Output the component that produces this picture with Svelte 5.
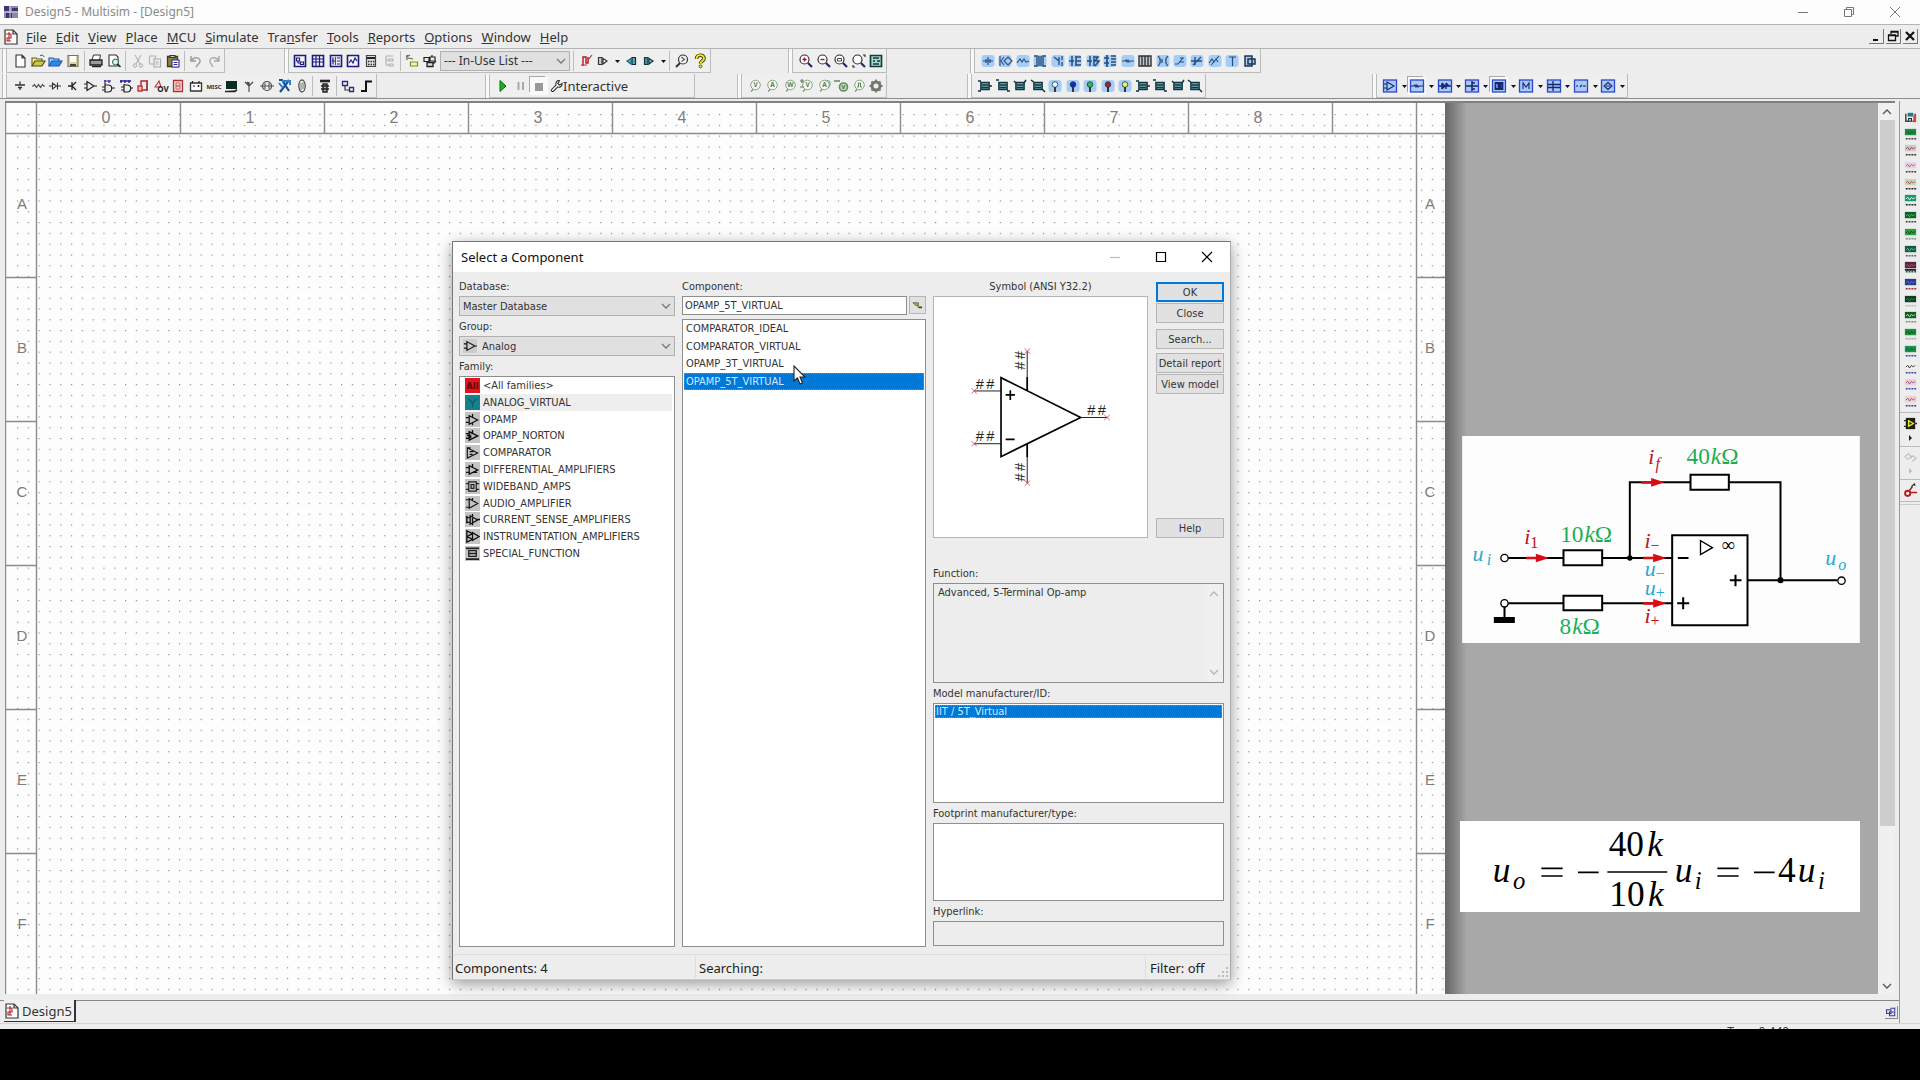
<script>
  const p = (d, c = '#222', w = 1.3, f = 'none') =>
    `<path d="${d}" stroke="${c}" stroke-width="${w}" fill="${f}"/>`;
  const t = (s, c, size = 7, x = 8, y = 11) =>
    `<text x="${x}" y="${y}" font-size="${size}" font-weight="700" text-anchor="middle" fill="${c}">${s}</text>`;
  const halo = '<rect x="1.500" y="2" width="13" height="12" rx="3" fill="#a6cdf6"/>';
  const bl = (d, w = 1.3) => halo + p(d, '#2a4d7c', w);
  const chip = (d) => '<rect x="3" y="4" width="10" height="8" fill="#7fb4c4"/>' + p('M4 4.5h8v7H4zM5 7h6M5 9.500h6' + d, '#12343c', 1.5);
  const pin = (c) => halo + p('M8 8v6', '#111', 1.6) + `<circle cx="8" cy="6.500" r="2.800" fill="${c}" stroke="#234" stroke-width=".8"/>`;
  const box = (d, w = 1.1) => '<rect x="1.500" y="2" width="13" height="12" fill="#a9c9f8" stroke="#2f45cc" stroke-width="1.300"/>' + p(d, '#14266e', w);
  const panel = (d, c = '#1c1c78') => p('M2.500 2.500h11v11h-11z', c, 1.6, '#f4f4ff') + p(d, c, 1.2);
  const probe = (s) => p('M4 13.500l2.500-2.500', '#71906d', 1.1) + '<circle cx="8.500" cy="7" r="4.800" fill="#f4f8f2" stroke="#8aa386"/>' + t(s, '#5d7f58', 6.5, 8.5, 9.3);
  const mag = (d, c = '#1f2a6b') => p('M10 10l4 4', c, 2.2) + '<circle cx="6.500" cy="6.500" r="4.500" fill="#fff" stroke="#3a2b33" stroke-width="1.200"/>' + p(d, '#a3171c', 1.4);
  const inst = (a, b, c, extra = '') =>
    `<rect x="2" y="2" width="12" height="7" fill="${a}"/><rect x="2" y="9" width="12" height="5" fill="#e6e9e6"/>` +
    p('M3 6.500l2-2 2 3 2-3 2 2 2-2', b, 1) + p('M3 12.500h2m1 0h2m1 0h2m1 0h2', c, 1.8) + extra;

  const icons = {
    new: p('M4 2h6l3 3v9H4zM10 2v3h3', '#333', 1.1, '#fff'),
    open: p('M2 13V5h4l1 1h5v2', '#5d5d1d', 1.1, '#f5ef8b') + p('M2 13l3-5h10l-3 5z', '#4b4b12', 1.1, '#c9c945') + p('M10 3c2-2 4 0 4 1', '#333', 1),
    openBlue: p('M2 13V5h4l1 1h5v2', '#1e4f9c', 1.1, '#9cc9f7') + p('M2 13l3-5h10l-3 5z', '#1558b5', 1.1, '#2f8ae6'),
    save: p('M3 2.500h10v11H3z', '#77725a', 1.1, '#d9d3a3') + '<path d="M5 3h6v6H5z" fill="#fff"/><path d="M5 11h6v2H5z" fill="#44423a"/>',
    print: p('M4 7l1.500-5h7L11.500 7', '#333', 1, '#fff') + p('M2 7h12v5H2z', '#222', 1.3, '#9a9a9a') + p('M4 13.500h9', '#222', 1.5),
    preview: p('M3 2h7l2 2v9H3z', '#333', 1.1, '#fff') + '<circle cx="9.500" cy="9" r="3" fill="#d8f0ee" stroke="#2a5e5b"/>' + p('M11.500 11l3 3', '#222', 1.6),
    cut: p('M5 2l5 9M11 2L6 11', '#b5b5b5', 1.2) + '<circle cx="5" cy="12.500" r="1.700" fill="none" stroke="#aaa"/><circle cx="11" cy="12.500" r="1.700" fill="none" stroke="#aaa"/>',
    copy: p('M2.500 3h6v8h-6z', '#b3b3b3', 1.1, '#eee') + p('M7 6h6.500v8H7zM8.500 9h3M8.500 11h3', '#aaa', 1.1, '#eee'),
    paste: p('M2.500 3.500h10v10h-10z', '#413a1e', 1.3, '#8d8046') + p('M5 2.500h5v2H5z', '#333', 1.2, '#ccc') + p('M7 7h7v7H7zM8.500 9.500h4M8.500 11.500h4', '#27308b', 1.1, '#fff'),
    undo: p('M3 3v5h5M3.500 7.500C6 3.500 13 4 12 9l-4 5', '#999', 1.4),
    redo: p('M13 3v5H8M12.500 7.500C10 3.500 3 4 4 9l3 5', '#a8a8a8', 1.4),
    designbox: panel('M4.500 5h3v3h-3zM8.500 9h3v2.500h-3zM6 8v2h2.500'),
    grid: panel('M3 6h10M3 9h10M6 3v10M9.500 3v10'),
    breadbd: panel('M5 4.500v7M4 8h3M9 5h3M9 8h3M9 11h3') + p('M7.500 4v8', '#b22', 1.2),
    grapher: panel('M4 10l2-3 2 3 2-5 2 3'),
    calc: p('M3.500 2.500h9v11h-9z', '#444', 1.2, '#ddd') + p('M4 5h8', '#222', 2) + p('M5 8.500h1.500m1 0H9m1 0h1.500M5 11.500h1.500m1 0H9m1 0h1.500', '#333', 1.6),
    tree: p('M5 3h7M5 3v9h3M5 7h3M8 6h4v2H8zM8 11h4v2H8z', '#b2b2b2', 1.2),
    parent: p('M2 4l4-2M3 2v5M4 5l5 1', '#665', 1.2) + p('M6.500 9h7v4h-7z', '#8b8b21', 1.2, '#f2f1ae'),
    wizard: p('M2 4.500h5v4H2zM8 4h5v4H8zM10 2v2', '#222', 1.2, '#eee') + p('M5 9.500h6v4H5zM11 11l3-3', '#222', 1.3, '#ddd'),
    erc: p('M5 13V4h3v6h2V4', '#b21823', 1.4) + p('M10 7l4-5M3 12h6', '#cc2c36', 1.2),
    fwd: p('M3.500 4.500h3.500v7H3.500z', '#333', 1.2, '#ccc') + p('M8 5.500l4 2.500-4 3z', '#333', 1.2, '#fff'),
    back: p('M9 4.500h3.500v7H9z', '#126', 1.2, '#6aa') + p('M8 5.500L4 8l4 3z', '#146a70', 1.2, '#7ebcc0'),
    fwd2: p('M3.500 4.500h3.500v7H3.500z', '#143b44', 1.2, '#479296') + p('M8 5.500l4 2.500-4 3z', '#143b44', 1.2, '#8cc'),
    find: '<circle cx="9" cy="6.500" r="4.500" fill="#f5f5f5" stroke="#333" stroke-width="1.200"/>' + p('M6 10l-4 4', '#333', 2) + p('M7.500 4l3 2.500-3 2', '#555', 1.1),
    help: p('M4.500 6c0-5 7.500-5 7.500-.5 0 2.500-3.500 2.500-3.500 5', '#3b3a0a', 3.6) + p('M4.500 6c0-5 7.500-5 7.500-.5 0 2.500-3.500 2.500-3.500 5', '#f2e52c', 1.8) + '<circle cx="8.500" cy="13.300" r="1.500" fill="#e8da20" stroke="#3b3a0a" stroke-width=".7"/>',
    zin: mag('M4.500 6.500h4M6.500 4.500v4'),
    zout: mag('M4.500 6.500h4'),
    zarea: mag('') + p('M4.500 5.500h4v2.500h-4z', '#444', 1),
    zfit: mag('') + p('M12 2h2v2M2 12v2h2', '#222', 1.1),
    full: p('M2.500 2.500h11v11h-11z', '#143c3a', 1.7, '#a9d6d0') + p('M5 5h6M5 8h2m2 0h3M5 11h6', '#143c3a', 1.3),
    source: p('M3 7h10M6 9.500h4M8 3.500v4M8 9.500V12', '#333', 1.3),
    resistor: p('M2 8h1.500l1-1.500 2 3 2-3 2 3 2-3 1 1.500h1.500', '#444', 1.1),
    diode: p('M2 8h3M5.500 5v6l4-3zM10.500 4.500v7M11 8h3', '#333', 1.1),
    npn: p('M3 8h4M7 4v8M7 8l4-4M7 8l4 4', '#222', 1.3),
    opamp: p('M5 3.500v9l7-4.500zM2 6h3M2 10h3M12 8h3', '#222', 1.2),
    ttl: p('M5 5v9h3c5 0 5-7 0-7H5M2 9h3M2 12h3M12 10h3', '#222', 1.2) + p('M4 3h7M5 2v3M9 2v3', '#26269c', 1.2),
    cmos: p('M6 6v8h3c5 0 5-7 0-7H6M3 9h3M3 12h3M12 10h3', '#222', 1.2) + p('M2 3h11M3 2v3M7 2v3M11 2v3', '#26269c', 1.4),
    misc7: p('M6 3h6v9H6z', '#b3262c', 1.4) + p('M3 8h4v5H3z', '#c33', 1.4, '#fbb') + p('M12 2v11', '#933', 1.2),
    mixed: p('M2 9l4-6 2 6z', '#c33', 1.2) + t('OV', '#222', 8, 10, 14),
    indicator: p('M3.500 2.500h9v11h-9z', '#a33', 1.3, '#f6d8d8') + p('M6 5h4v3H6zM6 8h4v3H6z', '#c66', 1),
    power: p('M2.500 5h11v8h-11z', '#333', 1.3, '#fff') + p('M4.500 3v2M11 3v2M5 8h2M9.500 8h2M10.500 7v2', '#222', 1.2),
    misc: t('MISC', '#333', 6),
    adv: '<path d="M3 3h11v8H3z" fill="#0d2b20"/>' + p('M2 13.500h10l2-2', '#222', 1.5, '#888'),
    rf: p('M8 14V4M4 4l4 4 4-4M6 4l2 2', '#444', 1.1),
    motor: '<circle cx="8" cy="8" r="4.500" fill="#eee" stroke="#444" stroke-width="1.200"/>' + p('M1 8h14M6 5v6M10 5v6', '#555', 1.1),
    ni: p('M3 2h3l7 11M13 2L8 9l-4 5', '#1b4f96', 2.2) + p('M6 3h8v4M3 5l4 5', '#2d7fd0', 2),
    conn: '<ellipse cx="8" cy="8" rx="3.200" ry="6" fill="#eee" stroke="#555" stroke-width="1.300"/>' + p('M7 5v7M9 4v7', '#777', 1, 'none'),
    mcu: p('M3 3h10', '#222', 2.6) + p('M6 6h4v8H6zM4 8h8M4 11h8', '#222', 1.4, '#aaa'),
    hier: p('M2.500 3.500h5v4h-5z', '#26268b', 1.3) + p('M5 8v4h4', '#333', 1.2) + p('M9.500 9.500h4v4h-4z', '#26268b', 1.3),
    bus: p('M3 13h5V3.500h6', '#111', 2),
    pV: probe('V'), pA: probe('A'), pW: probe('W'),
    pVV: probe('V') + p('M1 3h4M3 1v4M1 9h4', '#5d7f58', 1.2),
    pVA: probe('A') + p('M10 3c4-2 6 3 2 7', '#8aa386', 1.1),
    pVr: p('M1 3h6', '#5d7f58', 1.4) + '<circle cx="10.500" cy="9" r="4" fill="#c5dabf" stroke="#5f8f5a" stroke-width="1.600"/>' + t('V', '#3a6b38', 6, 10.5, 11.3),
    pD: probe('') + p('M6 9h1.500V5h2v4H11', '#5d7f58', 1),
    gear: '<circle cx="8" cy="8" r="4" fill="none" stroke="#6f7a6d" stroke-width="3"/>' + p('M8 1.500v3M8 11.500v3M1.500 8h3M11.500 8h3M3.500 3.500l2 2M10.500 10.500l2 2M12.500 3.500l-2 2M5.500 10.500l-2 2', '#6f7a6d', 1.8),
    b0: bl('M3 8h10M8 4v8M6 6v4M10 6v4', 1.2), b1: bl('M3 3v10M4 8l3-4M4 8l3 4M11 4l4 4-4 4-4-4z', 1.1),
    b2: bl('M2 10l3-4 2 3 2-3 2 3 3-1', 1.1), b3: bl('M2 3h3v10H2M14 3h-3v10h3M7 3v10M9 3v10', 1.4),
    b4: bl('M4 4l5 4M9 4v8M12 3v4M12 9v4'), b5: bl('M2 8h5M5 3v10M9 3v10M9 4h5M9 8h5M9 12h5', 1.5),
    b6: bl('M2 8h5M5 3v10M9 3v10M9 4h4l-3 4h4l-4 5', 1.5), b7: bl('M2 5h5M2 10h5M5 2v12M9 3h5M9 6h5M9 9h5M9 12h5', 1.7),
    b8: bl('M2 8h3l1-1 1 2 1-2 1 2 1-1h4', 1.1), b9: p('M2 3h12v10H2zM5 3v10M8 3v10M11 3v10', '#333', 1.4, '#b9cbd6'),
    b10: bl('M3 3c3 2 3 8 0 10M13 3c-3 2-3 8 0 10M7 6v4'), b11: bl('M3 11h3l5-6M8 5h4M7 9h5', 1.1),
    b12: bl('M2 8h11M4 12l8-8M6 4v8', 1.4), b13: bl('M2 10l3-4 2 3 2-3 2 3M4 12l8-9', 1.1),
    b14: bl('M5 4h7M8.500 4v9', 1.2), b15: p('M3 3h7v10H3zM6 6h7v5H6z', '#17365f', 1.5, '#b7cbe0'),
    c0: chip('M1 3h3M1 13h3M12 8h3'), c1: chip('M1 2h3M12 13h3'), c2: chip('M2 3l2 2M14 2l-2 3'), c3: chip('M1 2l4 3M12 11l3 3'),
    n0: pin('#f5faff'), n1: pin('#1a28c8'), n2: pin('#2bbd5b'), n3: pin('#9d2530'), n4: pin('#f1f26a'),
    v0: box('M5 4v8l7-4zM2 6h3M2 10h3'), v1: box('M2 8h3l1-1 1 2 1-2 1 2 1-1h4'),
    v2: box('M2 8h12M5 5v6M5 5l3 3-3 3M9 5v6M9 5l3 3', 1.4), v3: box('M2 8h12M8 3v10M8 5h3M8 11h3', 1.5),
    v4: box('M4.500 5h7v6h-7zM6.500 7h3v2h-3', 1.8), v5: box('M5 11V5l3 4 3-4v6'),
    v6: box('M2 6.500h12M2 9.500h12M7 3v10', 1.3), v7: box('M3 8h2m2 1l2-2m1 1h3'), v8: box('M8 4.500l4 3.500-4 3.500-4-3.500zM6 8h4'),
    i0: p('M3 4v8h3M13 4v8h-3', '#444', 1.6) + '<path d="M5 3h6v4H5z" fill="#1c7c86"/><path d="M11 6h3v7h-3z" fill="#d0483d"/>' + p('M6 9h3v3H6z', '#222', 1.2),
    i1: inst('#1d8a45', '#0b5c2a', '#444'), i2: inst('#cfc9c9', '#8c4a4a', '#333'), i3: inst('#e6d4e4', '#a3639a', '#443'),
    i4: inst('#c7d6bd', '#b0523e', '#222'), i5: inst('#18966c', '#d9fff0', '#222'), i6: inst('#125e28', '#2ad158', '#444'),
    i7: inst('#2c9b44', '#0c4b1c', '#888'), i8: inst('#155a3a', '#3cc7c0', '#666'), i9: inst('#54263f', '#c24d6c', '#167035', p('M2 10.500h12', '#222', 2)),
    i10: inst('#2a3b86', '#5a6fd0', '#933'), i11: inst('#0e3d20', '#1d8f3d', '#bbb'), i12: inst('#0d5c25', '#b6f0b0', '#888'),
    i13: inst('#19903a', '#0c4b1c', '#aaa'), i14: inst('#1b914d', '#0a5a2c', '#3b46b5'), i15: inst('#f2f2f2', '#333', '#3b46b5'),
    i16: inst('#ead1dc', '#a5507a', '#3b46b5'), i17: inst('#ead1dc', '#b54b5e', '#4b3ba5'),
    lv: '<path d="M3 2h10v12H3z" fill="#1c1d0c"/>' + p('M1 5h2M1 11h2M13 8h2', '#222', 1.4) + p('M6 5v6l5-3z', '#e8e83a', 1.5),
    off: p('M2 7l4-3 3 3-4 3zM8 9l3-3 3 3-4 3', '#bdbdbd', 1.1),
    clamp: '<circle cx="5" cy="11" r="2.800" fill="none" stroke="#b51a20" stroke-width="2"/>' + p('M6 9l4-5M8 10h7', '#b51a20', 1.6) + p('M9 4l3-3 1 2', '#222', 1.2),
    app: '<path d="M1 2h14v12H1z" fill="#8c87ad"/><path d="M1 2h5v5H1zM9 4h6v3H9zM3 9h6v5H3z" fill="#3b3570"/>' + p('M1 8h14M7 2v12', '#d3d0e6', 1),
    doc: p('M2 1h8l4 4v10H2z', '#333', 1.2, '#fff') + p('M10 1v4h4', '#333', 1.2) + p('M3 5h5v4H4v3h4M6 3v9', '#b5202a', 1.1),
    tile: p('M2 5h6v5H2zM7 3h6M6 8h7v5H6zM13 2v5', '#3a3a9a', 1.4, '#dcdcf3')
  };

  const standard = ['new', 'open', 'openBlue', 'save', '|', 'print', 'preview', '|', 'cut', 'copy', 'paste', '|', 'undo', 'redo'];
  const mainA = ['designbox', 'grid', 'breadbd', 'grapher', 'calc', 'tree', '|', 'parent', 'wizard'];
  const mainB = ['|', 'erc', 'fwd', 'v', 'back', 'fwd2', 'v', '|', 'find', 'help'];
  const zoomBar = ['zin', 'zout', 'zarea', 'zfit', 'full'];
  const basic = Array.from({ length: 16 }, (_, i) => 'b' + i);
  const parts = ['source', 'resistor', 'diode', 'npn', 'opamp', 'ttl', 'cmos', 'misc7', 'mixed', 'indicator', 'power', 'misc', 'adv', 'rf', 'motor', 'ni', 'conn', '|', 'mcu', '|', 'hier', 'bus'];
  const probes = ['pV', 'pA', 'pW', 'pVV', 'pVA', 'pVr', 'pD', 'gear'];
  const chips = ['c0', 'c1', 'c2', 'c3', 'n0', 'n1', 'n2', 'n3', 'n4', 'c0', 'c1', 'c2', 'c3'];
  const virtual = Array.from({ length: 9 }, (_, i) => ['v' + i, 'v']).flat();
  const instruments = Array.from({ length: 18 }, (_, i) => 'i' + i);

  const menus = [['', 'F', 'ile'], ['', 'E', 'dit'], ['', 'V', 'iew'], ['', 'P', 'lace'], ['', 'M', 'CU'], ['', 'S', 'imulate'], ['Tra', 'n', 'sfer'], ['', 'T', 'ools'], ['', 'R', 'eports'], ['', 'O', 'ptions'], ['', 'W', 'indow'], ['', 'H', 'elp']];

  const amp = p('M4.500 3v10l9-5zM1 5.500h3.500M1 10.500h3.500M13.500 8H16', '#111', 1.3);
  const families = [
    { n: '<All families>', bg: '#e3141b', g: t('All', '#5c0508', 10, 8, 12) },
    { n: 'ANALOG_VIRTUAL', bg: '#16818d', g: p('M4 4l4 5 4-5M8 9v4', '#0b5c66', 1.4) },
    { n: 'OPAMP', g: p('M4.500 4v9l9-4.500zM1 6h3.500M1 11h3.500M8 2v4M8 11v3', '#111', 1.3) },
    { n: 'OPAMP_NORTON', g: p('M4.500 4v9l9-4.500zM1 6h3.500M1 11h3.500M8 2v4M2 8h4v3', '#111', 1.5) },
    { n: 'COMPARATOR', g: p('M2.500 3v11l11-5.500zM5 7h4M5 10h3M2 3h4', '#111', 1.2) },
    { n: 'DIFFERENTIAL_AMPLIFIERS', g: p('M4.500 4v9l9-4.500zM1 6h3.500M1 11h3.500M8 2v4M9 11h4', '#111', 1.4) },
    { n: 'WIDEBAND_AMPS', g: p('M4 3h8v10H4zM1 5h3M1 11h3M12 5h3M12 11h3M6.500 6v4h3V6z', '#222', 1.3) },
    { n: 'AUDIO_AMPLIFIER', g: p('M4.500 3v10l9-5zM1 4h3.500M1 12h3.500M8 2v3', '#111', 1.3) },
    { n: 'CURRENT_SENSE_AMPLIFIERS', g: p('M5.500 4v9l8-4.500zM1 6h5M1 11h5M2 4v8M8 2v12M13 8h3', '#111', 1.4) },
    { n: 'INSTRUMENTATION_AMPLIFIERS', g: p('M2 2v6l6-3zM2 8v6l6-3zM8 4v8l7-4z', '#111', 1.4) },
    { n: 'SPECIAL_FUNCTION', g: p('M1 2.500h14M1 14h14', '#222', 2) + p('M4 5h8v6H4zM4 8h8', '#222', 1.4) }
  ];
  const components = ['COMPARATOR_IDEAL', 'COMPARATOR_VIRTUAL', 'OPAMP_3T_VIRTUAL', 'OPAMP_5T_VIRTUAL'];
  let family = $state('ANALOG_VIRTUAL');
  let component = $state('OPAMP_5T_VIRTUAL');
  const columns = [0, 1, 2, 3, 4, 5, 6, 7, 8];
  const rows = ['A', 'B', 'C', 'D', 'E', 'F'];
</script>

{#snippet icon(name)}
  <svg class="ico" viewBox="0 0 16 16" aria-hidden="true">{@html icons[name]}</svg>
{/snippet}

{#snippet tools(list)}
  {#each list as name}
    {#if name === '|'}
      <span class="sep"></span>
    {:else if name === 'v'}
      <button class="drop" aria-label="More"><svg viewBox="0 0 8 16" aria-hidden="true"><path d="M2 7h5L4.500 10z" fill="#111" /></svg></button>
    {:else}
      <button class="tool" class:sunk={name === 'v1' || name === 'v4'} aria-label={name}>{@render icon(name)}</button>
    {/if}
  {/each}
{/snippet}

{#snippet chevron(up)}
  <svg class="chev" viewBox="0 0 10 10" aria-hidden="true"><path d={up ? 'M1 7l4-4 4 4' : 'M1 3l4 4 4-4'} fill="none" stroke="currentColor" stroke-width="1.300" /></svg>
{/snippet}

<div class="app">
  <header class="titlebar">
    {@render icon('app')}
    <span class="apptitle">Design5 - Multisim - [Design5]</span>
    <div class="wincontrols">
      <button aria-label="Minimize"><svg viewBox="0 0 12 12"><path d="M1 6.500h10" /></svg></button>
      <button aria-label="Restore"><svg viewBox="0 0 12 12"><path d="M1.500 3.500h7v7h-7zM3.500 3.500v-2h7v7h-2" /></svg></button>
      <button aria-label="Close window"><svg viewBox="0 0 12 12"><path d="M1 1l10 10M11 1L1 11" /></svg></button>
    </div>
  </header>

  <nav class="menubar">
    {@render icon('doc')}
    {#each menus as [a, k, b]}
      <button class="menu">{a}<u>{k}</u>{b}</button>
    {/each}
    <div class="mdi">
      <button aria-label="Minimize document"><svg viewBox="0 0 12 12"><path d="M3 10h5" stroke-width="2" /></svg></button>
      <button aria-label="Restore document"><svg viewBox="0 0 12 12"><path d="M4 4V1.500h7V6H9M4 2h7M1.500 5h7v5.500h-7zM1 5.500h8" stroke-width="1.300" /></svg></button>
      <button aria-label="Close document"><svg viewBox="0 0 12 12"><path d="M2 2l8 8M10 2l-8 8" stroke-width="2.200" /></svg></button>
    </div>
  </nav>

  <div class="toolbars">
    <div class="toolrow">
      <div class="group g-standard">{@render tools(standard)}</div>
      <div class="group g-main">
        {@render tools(mainA)}
        <div class="combo inuse">
          <select aria-label="In-Use List"><option>--- In-Use List ---</option></select>
          {@render chevron(false)}
        </div>
        {@render tools(mainB)}
      </div>
      <div class="group g-zoom">{@render tools(zoomBar)}</div>
      <div class="group g-basic">{@render tools(basic)}</div>
    </div>
    <div class="toolrow">
      <div class="group g-parts">{@render tools(parts)}</div>
      <div class="group g-sim">
        <button class="tool" aria-label="Run"><svg class="ico" viewBox="0 0 16 16"><path d="M5 2.500v11L11 8z" fill="#16b51d" stroke="#0a6b0e" /></svg></button>
        <button class="tool" aria-label="Pause"><svg class="ico" viewBox="0 0 16 16"><path d="M5.500 4v8M10 4v8" stroke="#aaa" stroke-width="2" /></svg></button>
        <button class="tool sunk" aria-label="Stop"><svg class="ico" viewBox="0 0 16 16"><path d="M4 5h8v8H4z" fill="#999" /></svg></button>
        <button class="interactive"><svg class="ico" viewBox="0 0 16 16" aria-hidden="true"><path d="M3 12l5-5C7 3 10 1 12 2l-2 3 2 2 3-2c0 4-3 5-5 4l-5 5c-2 1-3-1-2-2z" fill="#fff" stroke="#222" stroke-width="1.200" /></svg>Interactive</button>
      </div>
      <div class="group g-probes">{@render tools(probes)}</div>
      <div class="group g-chips">{@render tools(chips)}</div>
      <div class="group g-virtual">{@render tools(virtual)}</div>
    </div>
  </div>

  <div class="middle">
    <div class="mainpane">
      <div class="view">
        <svg class="paper" viewBox="5 103 1440 891" preserveAspectRatio="xMinYMin slice" role="img" aria-label="Schematic sheet">
          <defs>
            <pattern id="dots" x="17" y="114" width="10.800" height="10.800" patternUnits="userSpaceOnUse"><rect width="1.200" height="1.200" fill="#8c8c8c" /></pattern>
          </defs>
          <rect x="5" y="103" width="1440" height="891" fill="#fdfdfd" />
          <rect x="14" y="112" width="1430" height="882" fill="url(#dots)" />
          <g class="rule">
            <path d="M5.500 103v891M36.500 103v891M1416.500 103v891M5 133.500h1440" />
            {#each columns as c}<path d={`M${180.5 + c * 144} 103v30`} />{/each}
            {#each rows.slice(0, 5) as _, r}<path d={`M5 ${277.5 + r * 144}h31M1416 ${277.5 + r * 144}h29`} />{/each}
          </g>
          {#each columns as c}<text x={106 + c * 144} y="123">{c}</text>{/each}
          {#each rows as r, i}<text class="row" x="22" y={209 + i * 144}>{r}</text><text class="row" x="1430" y={209 + i * 144}>{r}</text>{/each}
        </svg>

        <div class="desk">
          <svg class="circuit" viewBox="37 18 1193 621" role="img" aria-label="Inverting amplifier circuit">
            <rect x="37" y="18" width="1193" height="621" fill="#fdfdfd" />
            <g fill="none" stroke="#000" stroke-width="6">
              <path d="M175 384H341M457 384H666M175 520H341M457 520H666M540 384V157H722M837 157H992V451M893 451H1163M164 531v32" />
              <path d="M341 361h116v45H341zM341 497h116v44H341zM722 134h115v45H722zM667 316h226v270H667z" fill="#fff" />
              <path d="M684 384h32M682 520h36M700 502v36M840 451h35M857 434v35" />
              <path d="M752 332v42l36-21z" stroke-width="4" />
              <circle cx="164" cy="384" r="11" stroke-width="4" fill="#fff" /><circle cx="164" cy="520" r="11" stroke-width="4" fill="#fff" /><circle cx="1175" cy="452" r="11" stroke-width="4" fill="#fff" />
            </g>
            <path d="M132 561h63v18h-63z" /><circle cx="540" cy="384" r="8" /><circle cx="992" cy="451" r="9" />
            <g fill="#d80d14">
              <path d="M228 380h30v-9l40 13-40 13v-9h-30z" /><path d="M580 380h30v-9l40 13-40 13v-9h-30z" /><path d="M580 516h30v-9l40 13-40 13v-9h-30z" /><path d="M574 153h30v-9l40 13-40 13v-9h-30z" />
            </g>
            <text x="815" y="362" font-size="56">∞</text>
            <g class="green"><text x="710" y="101">40<tspan class="it" dx="3">k</tspan>Ω</text><text x="331" y="337">10<tspan class="it" dx="3">k</tspan>Ω</text><text x="329" y="612">8<tspan class="it" dx="3">k</tspan>Ω</text></g>
            <g class="it red"><text x="595" y="103">i<tspan class="sub" dx="4" dy="14">f</tspan></text><text x="223" y="342">i<tspan class="sub up" dy="12">1</tspan></text><text x="584" y="353">i<tspan class="sub up" dy="10">−</tspan></text><text x="584" y="579">i<tspan class="sub up" dy="10">+</tspan></text></g>
            <g class="it blue"><text x="68" y="393">u<tspan class="sub" dx="10" dy="12">i</tspan></text><text x="1126" y="405">u<tspan class="sub" dx="6" dy="14">o</tspan></text><text x="585" y="437">u<tspan class="sub up" dy="10">−</tspan></text><text x="585" y="495">u<tspan class="sub up" dy="10">+</tspan></text></g>
          </svg>
          <svg class="formula" viewBox="60 63 1200 273" role="img" aria-label="Output voltage formula">
            <rect x="60" y="63" width="1200" height="273" fill="#fff" />
            <path d="M502 216h180M304 205h64M304 228h64M414 217h62M832 205h64M832 228h64M942 217h62" stroke="#000" stroke-width="5" />
            <text class="it" x="158" y="246">u</text><text class="it s" x="219" y="268">o</text>
            <text x="506" y="167">40<tspan class="it" dx="10">k</tspan></text><text x="508" y="318">10<tspan class="it" dx="10">k</tspan></text>
            <text class="it" x="704" y="246">u</text><text class="it s" x="764" y="268">i</text>
            <text x="1014" y="246">4<tspan class="it" dx="6">u</tspan></text><text class="it s" x="1134" y="268">i</text>
          </svg>
        </div>

        <div class="vscroll">
          <button aria-label="Scroll up">{@render chevron(true)}</button>
          <div class="thumb"></div>
          <button aria-label="Scroll down">{@render chevron(false)}</button>
        </div>
      </div>
      <div class="tabs">
        <button class="tab">{@render icon('doc')}Design5</button>
        <button class="tile" aria-label="Sheets">{@render icon('tile')}</button>
      </div>
    </div>
    <aside class="side">
      {#each instruments as name}<button class="tool" aria-label={name}>{@render icon(name)}</button>{/each}
      <hr />
      <button class="tool" aria-label="LabVIEW">{@render icon('lv')}</button>
      <svg class="flyout" viewBox="0 0 8 8"><path d="M3 1v6l3-3z" fill="#222" /></svg>
      <hr />
      <button class="tool" aria-label="NI ELVISmx">{@render icon('off')}</button>
      <svg class="flyout" viewBox="0 0 8 8"><path d="M3 1v6l3-3z" fill="#bbb" /></svg>
      <hr />
      <button class="tool" aria-label="Current clamp">{@render icon('clamp')}</button>
      <hr />
    </aside>
  </div>
  <footer class="status"><span>Tran: 0.440 s</span></footer>
  <div class="letterbox"></div>

  <section class="dialog" aria-label="Select a Component">
    <header class="dtitle">
      <h1>Select a Component</h1>
      <div class="dcontrols">
        <button class="dim" aria-label="Minimize dialog"><svg viewBox="0 0 12 12"><path d="M1 6.500h10" /></svg></button>
        <button aria-label="Maximize dialog"><svg viewBox="0 0 12 12"><path d="M1.500 1.500h9v9h-9z" /></svg></button>
        <button aria-label="Close dialog"><svg viewBox="0 0 12 12"><path d="M1 1l10 10M11 1L1 11" /></svg></button>
      </div>
    </header>

    <div class="dbody">
      <div class="col c1">
        <label for="db">Database:</label>
        <div class="combo"><select id="db"><option>Master Database</option></select>{@render chevron(false)}</div>
        <label for="grp">Group:</label>
        <div class="combo grp"><svg class="ico" viewBox="0 0 16 16" aria-hidden="true"><rect width="16" height="16" fill="#ccc" />{@html amp}</svg><select id="grp"><option>Analog</option></select>{@render chevron(false)}</div>
        <span class="lbl">Family:</span>
        <div class="list">
          <ul class="families">
            {#each families as f}
              <li><button class:current={f.n === family} onclick={() => (family = f.n)}><svg class="fam" viewBox="0 0 16 16" aria-hidden="true"><rect width="16" height="16" fill={f.bg ?? '#c4c4c4'} />{@html f.g}</svg><span>{f.n}</span></button></li>
            {/each}
          </ul>
        </div>
      </div>

      <div class="col c2">
        <label for="comp">Component:</label>
        <div class="comprow">
          <input id="comp" bind:value={component} />
          <button class="filter" aria-label="Filter"><svg viewBox="0 0 12 12"><path d="M1 3h6v3H4z" fill="#a3b23e" stroke="#553" stroke-width=".8" /><path d="M5 7h6v2H8z" fill="#3c4a12" /></svg></button>
        </div>
        <div class="list">
          <ul class="components">
            {#each components as c}
              <li><button class:selected={c === component} onclick={() => (component = c)}>{c}</button></li>
            {/each}
          </ul>
        </div>
      </div>

      <div class="col c3">
        <div class="upper">
          <div class="symcol">
            <span class="lbl center">Symbol (ANSI Y32.2)</span>
            <svg class="symbol" viewBox="39 199 642 723" role="img" aria-label="Five terminal op-amp">
              <g fill="none" stroke="#222" stroke-width="3"><path d="M160 482h80M160 641h80M481 562h80M320 362v118M320 642v118" /></g>
              <g fill="none" stroke="#000" stroke-width="5"><path d="M241 442v238l240-118zM320 440v42M320 642v40M255 494h28M269 480v29M255 628h27" /></g>
              <g stroke="#d8484f" stroke-width="2.500"><path d="M152 474l16 16M168 474l-16 16M152 633l16 16M168 633l-16 16M552 554l17 16M569 554l-17 16M312 354l17 16M329 354l-17 16M312 752l17 16M329 752l-17 16" /></g>
              <text x="177 209" y="475">##</text><text x="177 209" y="634">##</text><text x="513 545" y="556">##</text>
              <text transform="translate(313 406) rotate(-90)" x="0 32" y="0">##</text>
              <text transform="translate(313 743) rotate(-90)" x="0 32" y="0">##</text>
            </svg>
          </div>
          <div class="actions">
            <button class="btn primary">OK</button>
            <button class="btn">Close</button>
            <button class="btn gap">Search...</button>
            <button class="btn gap2">Detail report</button>
            <button class="btn">View model</button>
            <button class="btn last">Help</button>
          </div>
        </div>
        <label for="fn">Function:</label>
        <div class="fn">
          <textarea id="fn" readonly>Advanced, 5-Terminal Op-amp</textarea>
          <div class="fnscroll">{@render chevron(true)}{@render chevron(false)}</div>
        </div>
        <span class="lbl">Model manufacturer/ID:</span>
        <div class="model"><button class="selected">IIT / 5T_Virtual</button></div>
        <span class="lbl">Footprint manufacturer/type:</span>
        <div class="foot"></div>
        <label for="link">Hyperlink:</label>
        <input id="link" class="link" readonly />
      </div>
    </div>

    <footer class="dstatus">
      <span class="s1">Components: 4</span><span class="s2">Searching:</span><span class="s3">Filter: off</span>
      <svg class="gripper" viewBox="0 0 12 12" aria-hidden="true"><path d="M8 0h2v2H8zM8 4h2v2H8zM4 4h2v2H4zM8 8h2v2H8zM4 8h2v2H4zM0 8h2v2H0z" fill="#bbb" /></svg>
    </footer>
  </section>

  <svg class="cursor" viewBox="0 0 14 20" aria-hidden="true"><path d="M1 1v15l3.500-3 2.500 6 2.500-1L7 12h5z" fill="#fff" stroke="#222" stroke-width="1.100" /></svg>
</div>

<style>
  :global(body) { margin: 0; overflow: hidden; }
  .app { position: relative; display: flex; flex-direction: column; height: 100vh; background: #ededed; color: #333; font-family: 'Noto Sans', 'Open Sans', sans-serif; font-size: 13px; overflow: hidden; }
  button { font: inherit; color: inherit; background: none; border: 0; padding: 0; margin: 0; }
  .ico { width: 16px; height: 16px; display: block; flex: none; }

  .titlebar { display: flex; align-items: center; box-sizing: border-box; height: 25px; padding: 0 0 1px 3px; background: #fdfdfd; border-bottom: 1px solid #b4b4b4; }
  .apptitle { margin-left: 6px; color: #8a8a8a; font-size: 12px; line-height: 20px; }
  .wincontrols { margin-left: auto; display: flex; gap: 34px; padding-right: 19px; }
  .wincontrols button, .dcontrols button { width: 12px; height: 12px; }
  .wincontrols svg, .dcontrols svg { display: block; width: 12px; height: 12px; fill: none; stroke: #777; }

  .menubar { display: flex; align-items: center; box-sizing: border-box; height: 24px; padding-left: 3px; border-bottom: 1px solid #b4b4b4; }
  .menu { margin-left: 9px; font-size: 13px; line-height: 20px; }
  .menu:first-of-type { margin-left: 7px; }
  .mdi { margin-left: auto; display: flex; gap: 2px; padding-right: 2px; }
  .mdi button { width: 15px; height: 15px; border-right: 1px solid #777; border-bottom: 1px solid #777; }
  .mdi svg { display: block; width: 12px; height: 12px; margin: auto; fill: none; stroke: #111; }

  .toolbars { height: 49px; border-bottom: 1px solid #8c8c8c; overflow: hidden; }
  .toolrow { display: flex; height: 25px; }
  .toolrow + .toolrow { height: 24px; }
  .group { display: flex; align-items: center; justify-content: space-between; box-sizing: border-box; flex: none; height: 24px; padding: 0 2px 0 5px; border: solid #bcbcbc; border-width: 0 1px 1px 1px; box-shadow: -3px 0 0 #f8f8f8, -4px 0 0 #bcbcbc; background: #efefef; }
  .g-standard { margin-left: 6px; width: 219px; }
  .g-main { margin-left: 63px; width: 423px; padding-left: 3px; }
  .g-zoom { margin-left: 81px; width: 95px; }
  .g-basic { margin-left: 87px; width: 287px; }
  .g-parts { margin-left: 6px; width: 371px; }
  .g-sim { margin-left: 112px; width: 206px; justify-content: flex-start; gap: 2px; }
  .g-probes { margin-left: 46px; width: 146px; }
  .g-chips { margin-left: 84px; width: 235px; }
  .g-virtual { margin-left: 170px; width: 252px; padding: 0 1px 0 5px; }
  .tool { width: 16px; height: 16px; flex: none; }
  .drop, .drop svg { width: 8px; height: 16px; display: block; flex: none; }
  .sep { width: 1px; height: 20px; margin: 0 2px 0 1px; background: #bdbdbd; flex: none; }
  .sunk { background: #fafafa; box-shadow: 0 0 0 1px #fafafa, -2px -2px 0 #a9a9a9; }
  .interactive { display: flex; align-items: center; font-size: 13px; }
  .interactive .ico { width: 14px; height: 14px; }

  .combo { display: grid; align-items: center; border: 1px solid #b0b0b0; background: #e0e0e0; box-sizing: border-box; color: #777; }
  .combo > * { grid-area: 1 / 1; }
  .combo select { appearance: none; width: 100%; height: 100%; border: 0; background: transparent; font: inherit; color: #333; padding: 0 3px; }
  .combo .chev { justify-self: end; margin-right: 3px; }
  .chev { width: 10px; height: 10px; display: block; }
  .inuse { width: 130px; height: 20px; font-size: 12px; line-height: 18px; flex: none; }

  .middle { display: flex; flex: 1; min-height: 0; padding-top: 2px; }
  .mainpane { flex: 1; min-width: 0; display: flex; flex-direction: column; border-right: 1px solid #999; }
  .view { flex: 1; min-height: 0; display: flex; margin-left: 5px; border-top: 2px solid #808080; margin-right: 4px; overflow: hidden; }
  .paper { width: 1440px; height: 100%; flex: none; display: block; }
  .paper text { font: 16px 'Liberation Sans', sans-serif; fill: #7d7d7d; text-anchor: middle; }
  .paper .row { font-size: 15px; }
  .rule { stroke: #8c8c8c; stroke-width: 1.4; fill: none; }
  .desk { flex: 1; display: flex; flex-direction: column; align-items: flex-start; gap: 178px; padding: 333px 0 0 15px; background: linear-gradient(90deg, #666, #a8a8a8 22px); overflow: hidden; }
  .circuit { width: 398px; height: 207px; margin-left: 2px; flex: none; }
  .formula { width: 400px; height: 91px; flex: none; }
  .circuit text, .formula text { font-family: 'Liberation Serif', serif; }
  .circuit g text { font-size: 66px; }
  .circuit .green text { font-size: 70px; }
  .it, .circuit .it text { font-style: italic; }
  .circuit .sub { font-size: 48px; }
  .up { font-style: normal; }
  .green { fill: #1cae55; }
  .red { fill: #b81623; }
  .blue { fill: #2aaad0; }
  .formula text { font-size: 106px; }
  .formula .s { font-size: 74px; }
  .vscroll { width: 17px; display: flex; flex-direction: column; background: #f0f0f0; color: #555; }
  .vscroll button { height: 17px; display: grid; place-items: center; }
  .thumb { height: 706px; margin: 0 0 auto 2px; background: #cdcdcd; }
  .tabs { display: flex; justify-content: space-between; align-items: flex-start; height: 22px; margin-top: 6px; border-top: 1px solid #888; }
  .tab { display: flex; align-items: center; gap: 2px; height: 22px; margin: -1px 0 0 4px; padding: 0 2px 0 0; border: solid #333; border-width: 0 2px 1px 0; background: #f0f0f0; font-size: 13px; }
  .tile { width: 13px; height: 13px; margin: 5px 1px 0 0; border-right: 1px solid #888; border-bottom: 1px solid #888; }
  .tile .ico { width: 12px; height: 12px; }
  .side { width: 20px; display: flex; flex-direction: column; align-items: center; justify-content: flex-start; padding-top: 8px; box-sizing: border-box; height: 404px; border-bottom: 1px solid #ccc; }
  .side .tool { height: 14px; flex: 1 1 14px; display: grid; place-items: center; }
  .side .ico { width: 15px; height: 15px; }
  .side hr { width: 100%; border: 0; border-top: 1px solid #bbb; margin: 2px 0; }
  .flyout { width: 8px; height: 8px; margin: 2px 0; flex: none; }
  .status { height: 5px; overflow: hidden; border-top: 1px solid #d6d6d6; padding-right: 122px; text-align: right; font-size: 12px; line-height: 16px; }
  .letterbox { height: 51px; background: #000; flex: none; }

  .dialog { position: absolute; left: 452px; top: 241px; width: 779px; height: 739px; box-sizing: border-box; display: flex; flex-direction: column; background: #ededed; border: 1px solid #777; border-right-color: #aaa; border-bottom-color: #ccc; box-shadow: 0 4px 14px rgba(0, 0, 0, 0.4); font-family: 'DejaVu Sans Condensed', 'DejaVu Sans', sans-serif; font-stretch: condensed; font-size: 11px; }
  .dtitle { display: flex; align-items: center; height: 30px; background: #fff; padding: 0 17px 0 8px; }
  h1 { margin: 0; font: 400 13px/20px 'Noto Sans', sans-serif; color: #111; }
  .dcontrols { margin-left: auto; display: flex; gap: 34px; }
  .dcontrols svg { stroke: #000; stroke-width: 1.2; }
  .dcontrols .dim svg { stroke: #bbb; }
  .dbody { flex: 1; min-height: 0; display: flex; gap: 7px; padding: 7px 6px 7px; }
  .col { display: flex; flex-direction: column; }
  .c1 { width: 216px; }
  .c2 { width: 244px; }
  .c3 { flex: 1; }
  label, .lbl { height: 16px; line-height: 16px; flex: none; }
  .center { text-align: center; }
  .c1 .combo { height: 20px; margin-bottom: 3px; flex: none; }
  .c1 label, .c1 .lbl, .c2 label { height: 16px; padding-bottom: 1px; }
  .grp select { padding-left: 22px; }
  .grp .ico { margin-left: 3px; width: 14px; height: 14px; }
  .list { flex: 1; background: #fff; border: 1px solid #8e8e8e; min-height: 0; }
  ul { list-style: none; margin: 0; padding: 0; display: grid; grid-auto-rows: 1fr; }
  li, li button { display: flex; align-items: center; min-height: 0; }
  li button { width: 100%; height: 100%; text-align: left; }
  .families { height: 185px; padding: 0 2px 0 5px; }
  .families button { gap: 2px; }
  .families span { padding-left: 1px; }
  .fam { width: 15px; height: 15px; flex: none; }
  .current { background: #eee; }
  .components { height: 70px; padding: 0 1px; }
  .components button { padding-left: 2px; }
  .selected { background: #0078d7; color: #cfe8ff; outline: 1px dotted #c77f34; outline-offset: -1px; }
  .comprow { display: flex; gap: 2px; margin-bottom: 4px; }
  input { flex: 1; min-width: 0; height: 19px; box-sizing: border-box; border: 1px solid #8e8e8e; background: #fff; padding: 0 2px; font: inherit; color: inherit; }
  .filter { width: 17px; height: 18px; border: 1px solid #b5b5b5; background: #e1e1e1; box-sizing: border-box; display: grid; place-items: center; }
  .filter svg { width: 11px; height: 11px; }
  .upper { display: flex; gap: 8px; height: 259px; }
  .symcol { width: 215px; display: flex; flex-direction: column; }
  .symcol .lbl { padding-bottom: 1px; }
  .symbol { width: 213px; height: 240px; background: #fff; border: 1px solid #b4b4b4; }
  .symbol text { font: 44px 'Liberation Sans', sans-serif; fill: #222; text-anchor: middle; }
  .actions { flex: 1; display: flex; flex-direction: column; gap: 1px; padding: 3px 0 0; }
  .btn { height: 20px; border: 1px solid #b5b5b5; background: #e1e1e1; box-sizing: border-box; flex: none; }
  .primary { border: 2px solid #0078d7; }
  .gap { margin-top: 5px; }
  .gap2 { margin-top: 3px; }
  .last { margin-top: auto; }
  .c3 > label, .c3 > .lbl { margin-top: 3px; padding-bottom: 1px; }
  .c3 .upper + label { margin-top: 28px; }
  .fn { display: flex; height: 100px; border: 1px solid #8e8e8e; box-sizing: border-box; flex: none; }
  textarea { flex: 1; resize: none; border: 0; background: transparent; padding: 2px 4px; font: inherit; line-height: 14px; color: inherit; overflow: hidden; }
  .fnscroll { width: 17px; display: flex; flex-direction: column; justify-content: space-between; align-items: center; padding: 5px 1px; background: #f0f0f0; color: #b5b5b5; }
  .model, .foot { background: #fff; border: 1px solid #8e8e8e; box-sizing: border-box; flex: none; }
  .model { height: 100px; padding: 1px; }
  .model button { display: block; width: 100%; height: 13px; line-height: 13px; padding-left: 1px; text-align: left; }
  .foot { height: 78px; }
  .link { background: #ededed; flex: none; height: 25px; }
  .dstatus { display: flex; align-items: center; height: 24px; border-top: 1px solid #ddd; font-family: 'Noto Sans', sans-serif; font-size: 13px; color: #222; padding-left: 2px; }
  .dstatus span { height: 22px; line-height: 24px; box-sizing: border-box; }
  .s1 { width: 240px; }
  .s2 { flex: 1; border-left: 1px solid #ddd; padding-left: 3px; }
  .s3 { width: 71px; border-left: 1px solid #ddd; padding-left: 4px; }
  .gripper { width: 12px; height: 12px; align-self: flex-end; margin-left: 2px; }
  .cursor { position: absolute; left: 793px; top: 365px; width: 14px; height: 20px; }
</style>
